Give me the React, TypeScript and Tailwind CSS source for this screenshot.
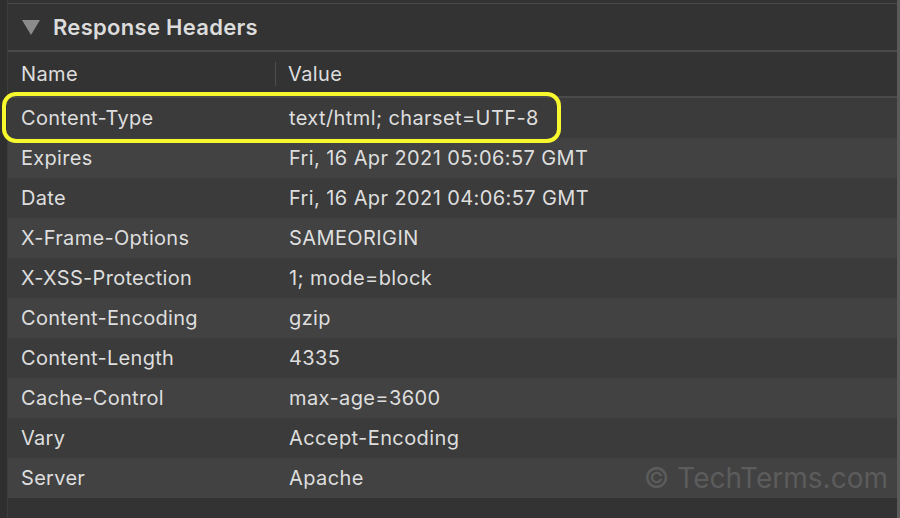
import React from 'react';

const rows: [string, string][] = [
  ['Content-Type', 'text/html; charset=UTF-8'],
  ['Expires', 'Fri, 16 Apr 2021 05:06:57 GMT'],
  ['Date', 'Fri, 16 Apr 2021 04:06:57 GMT'],
  ['X-Frame-Options', 'SAMEORIGIN'],
  ['X-XSS-Protection', '1; mode=block'],
  ['Content-Encoding', 'gzip'],
  ['Content-Length', '4335'],
  ['Cache-Control', 'max-age=3600'],
  ['Vary', 'Accept-Encoding'],
  ['Server', 'Apache'],
];

export default function App() {
  return (
    <div
      className="w-[900px] h-[518px] overflow-hidden bg-[#333333] flex text-[#dedede]"
      style={{ fontFamily: 'Inter, "Noto Sans", sans-serif' }}
    >
      <div className="w-[8px] bg-[#2f2f2f] border-r border-[#3d3d3d] shrink-0" />
      <div className="flex-1 flex flex-col relative">
        <div className="h-[4px] border-b border-[#494949] shrink-0" />
        <div className="h-[48px] flex items-center gap-[13px] pl-[14px] border-b-2 border-[#4a4a4a] shrink-0">
          <svg width="18" height="16" viewBox="0 0 18 16">
            <polygon points="0,1 18,1 9,16" fill="#8b8b8b" />
          </svg>
          <span className="text-[22px] font-semibold tracking-[0.3px] text-[#dcdcdc]">Response Headers</span>
        </div>
        <div className="h-[46px] flex items-center border-b-2 border-[#4a4a4a] shrink-0 text-[20px] tracking-[0.4px]">
          <div className="w-[267px] pl-[13px]">Name</div>
          <div className="w-px h-[24px] bg-[#4e4e4e]" />
          <div className="pl-[12px]">Value</div>
        </div>
        {rows.map(([name, value], i) => (
          <div
            key={name}
            className={`h-[40px] flex items-center text-[20px] shrink-0 ${i % 2 === 0 ? 'bg-[#3b3b3b]' : 'bg-[#424242]'}`}
          >
            <div className="w-[267px] pl-[13px] tracking-[0.3px]">{name}</div>
            <div className="pl-[14px] tracking-[0.4px]">{value}</div>
            {name === 'Server' && (
              <div className="ml-auto mr-[9px] text-[28px] text-[#5c5c5c]">© TechTerms.com</div>
            )}
          </div>
        ))}
        <div className="flex-1" />
        <div className="absolute left-[-6px] top-[92px] w-[559px] h-[51px] rounded-[14px] border-[4px] border-[#f8f82e]" />
      </div>
      <div className="w-[3px] bg-[#5a5a5a] shrink-0" />
    </div>
  );
}
